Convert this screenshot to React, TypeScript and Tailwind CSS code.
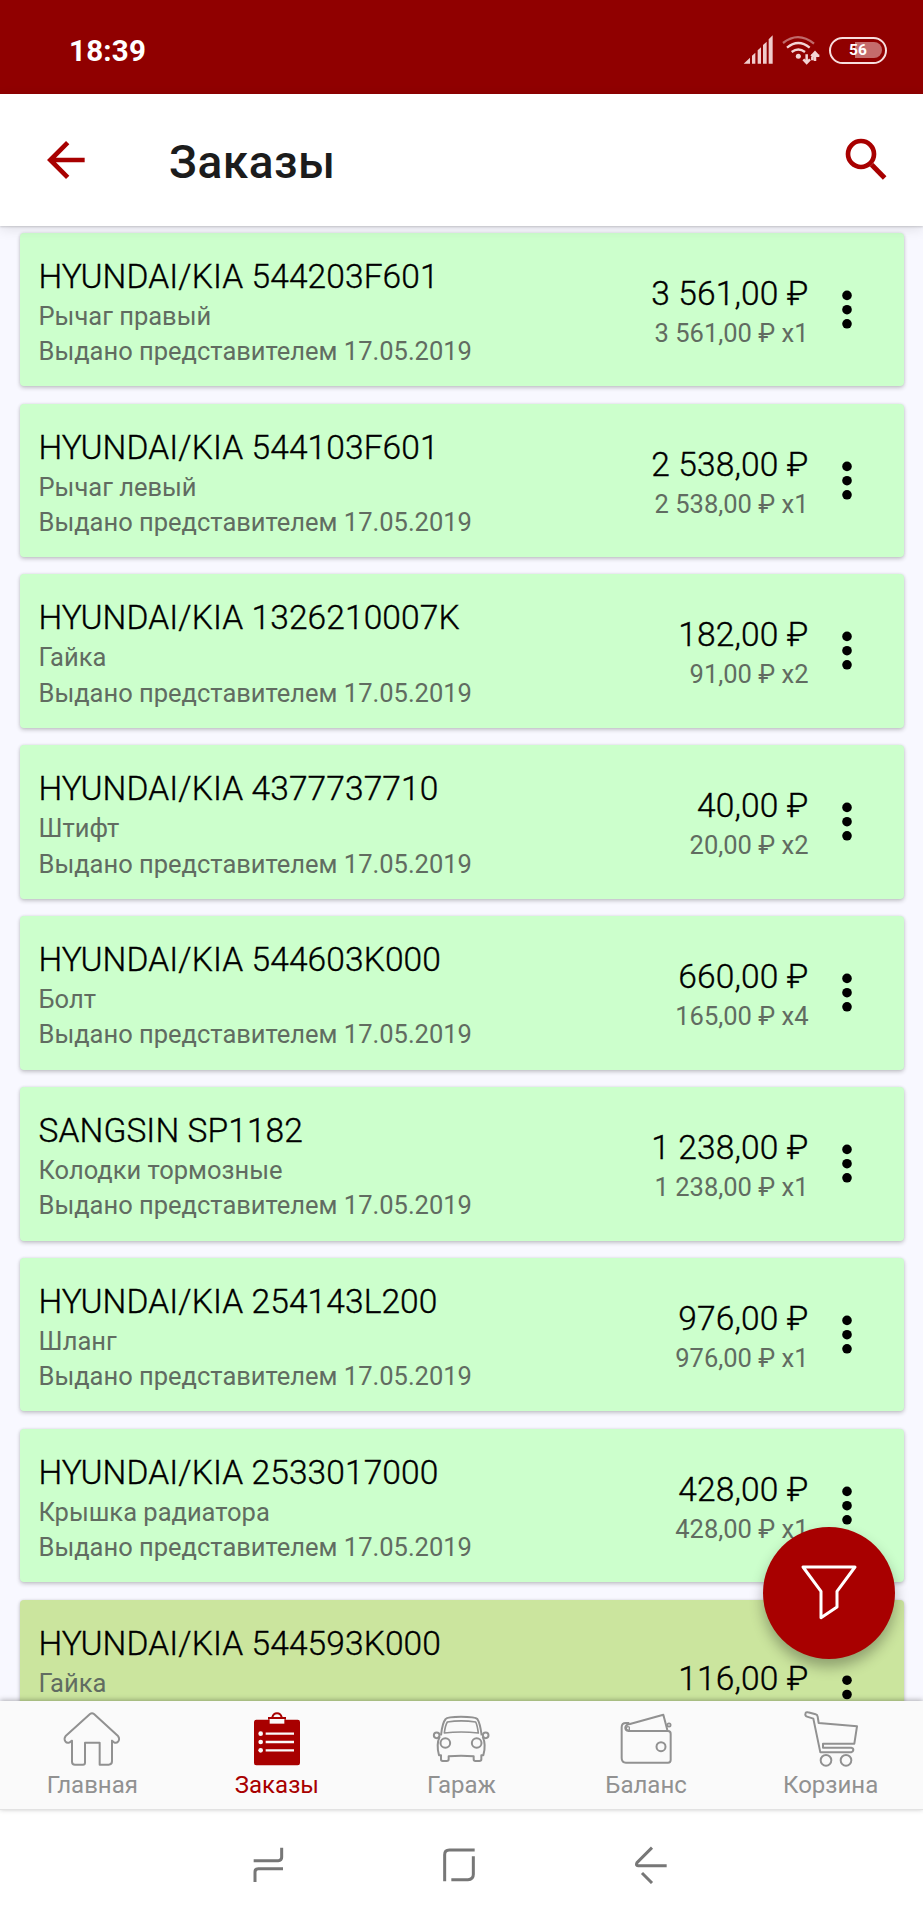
import type { ReactNode } from "react"

type Order = {
  title: string
  name: string
  total: string
  unit?: string
  status?: string
  partial?: boolean
}

const ISSUED = "Выдано представителем 17.05.2019"

const orders: Order[] = [
  { title: "HYUNDAI/KIA 544203F601", name: "Рычаг правый", total: "3 561,00 ₽", unit: "3 561,00 ₽ x1", status: ISSUED },
  { title: "HYUNDAI/KIA 544103F601", name: "Рычаг левый", total: "2 538,00 ₽", unit: "2 538,00 ₽ x1", status: ISSUED },
  { title: "HYUNDAI/KIA 1326210007K", name: "Гайка", total: "182,00 ₽", unit: "91,00 ₽ x2", status: ISSUED },
  { title: "HYUNDAI/KIA 4377737710", name: "Штифт", total: "40,00 ₽", unit: "20,00 ₽ x2", status: ISSUED },
  { title: "HYUNDAI/KIA 544603K000", name: "Болт", total: "660,00 ₽", unit: "165,00 ₽ x4", status: ISSUED },
  { title: "SANGSIN SP1182", name: "Колодки тормозные", total: "1 238,00 ₽", unit: "1 238,00 ₽ x1", status: ISSUED },
  { title: "HYUNDAI/KIA 254143L200", name: "Шланг", total: "976,00 ₽", unit: "976,00 ₽ x1", status: ISSUED },
  { title: "HYUNDAI/KIA 2533017000", name: "Крышка радиатора", total: "428,00 ₽", unit: "428,00 ₽ x1", status: ISSUED },
  { title: "HYUNDAI/KIA 544593K000", name: "Гайка", total: "116,00 ₽", partial: true },
]

function StatusBar() {
  return (
    <div className="flex h-[94px] shrink-0 items-center bg-[#900000] pl-[69px] pr-9 pt-[6px] text-white">
      <span className="grow pt-[3px] text-[29.5px] font-bold leading-none tracking-[0.2px]">18:39</span>
      <svg className="mr-[9px] h-[30px] w-[30px]" viewBox="130 104 90 90" fill="#f0cccc">
        <path d="M132 190L151 172V190ZM157 166L167 157V190H157ZM174 150L184 141V190H174ZM190 134L201 124V190H190ZM207 117L219 105V190H207Z" />
      </svg>
      <svg className="mr-[8px] h-[30px] w-[39px]" viewBox="245 102 117 90" fill="none" stroke="#f3d4d4" strokeWidth="7">
        <path d="M248 126Q294 90 341 128" stroke="#c06a6a" />
        <path d="M260 140Q294 112 328 140" />
        <path d="M274 153Q294 138 314 153" />
        <circle cx="294" cy="166" r="7.5" fill="#f3d4d4" stroke="none" />
        <path d="M319 160V184M309 175L319 186L329 175M344 180V156M333 166L344 154L355 166M332 164H357M336 178V160" strokeWidth="7.5" />
      </svg>
      <div className="relative flex h-[27px] w-[58px] items-center justify-center rounded-full border-[2.5px] border-[#f7dede]">
        <div className="absolute right-[3px] top-[3px] h-[16px] w-[27px] rounded-r-full bg-[#c46c6c]" />
        <span className="relative pt-px text-[15.5px] font-bold leading-none">56</span>
      </div>
    </div>
  )
}

function AppBar() {
  return (
    <header className="relative z-10 flex h-[132px] shrink-0 items-center bg-white pl-[47px] pr-[36px] shadow-[0_1px_2px_rgba(0,0,0,0.16),0_3px_12px_rgba(0,0,0,0.10)]">
      <svg className="mt-[-1px] h-[38px] w-[39px]" viewBox="141 422 117 114" fill="none" stroke="#a80000" strokeWidth="14">
        <path d="M254 479H152M203 427L151 479L203 531" />
      </svg>
      <h1 className="ml-[83px] mt-[3px] grow text-[46px] font-medium leading-none tracking-[0.5px] text-[#1c1c1c]">Заказы</h1>
      <svg className="mt-[-3px] h-[42px] w-[42px]" viewBox="434 413 126 126" fill="none" stroke="#a80000">
        <circle cx="482" cy="461" r="39" strokeWidth="14" />
        <path d="M514 493L553 533" strokeWidth="15" />
      </svg>
    </header>
  )
}

function OrderCard({ order }: { order: Order }) {
  return (
    <div
      className={`flex shrink-0 rounded-[4px] pl-[19px] pr-[52px] shadow-[0_2px_4px_rgba(0,0,0,0.2),0_0_3px_rgba(0,0,0,0.1)] ${
        order.partial ? "h-[189px] bg-[#cbe59e]" : "h-[153.4px] bg-[#ccffcc]"
      }`}
    >
      <div className="grow whitespace-nowrap pt-[25px]">
        <div className="text-[33.5px] font-light leading-[38px] tracking-[0.1px] text-black [-webkit-text-stroke:0.35px]">{order.title}</div>
        <div className="mt-[3px] text-[25.5px] leading-[35.2px] text-[#616c61]">{order.name}</div>
        {order.status && <div className="text-[25.5px] leading-[35.2px] text-[#616c61]">{order.status}</div>}
      </div>
      <div className={`whitespace-nowrap text-right ${order.partial ? "pt-[60px]" : "pt-[42px]"}`}>
        <div className="text-[33.5px] font-light leading-[38px] tracking-[0.15px] text-black [-webkit-text-stroke:0.35px]">{order.total}</div>
        {order.unit && <div className="mt-[3px] text-[25.5px] leading-[35.2px] text-[#616c61]">{order.unit}</div>}
      </div>
      <svg className="ml-[33px] h-full w-[10px]" viewBox="0 0 10 153.4">
        <circle cx="5" cy="62.4" r="4.8" />
        <circle cx="5" cy="76.7" r="4.8" />
        <circle cx="5" cy="90.8" r="4.8" />
      </svg>
    </div>
  )
}

function Tab({ label, viewBox, active, children }: { label: string; viewBox: string; active?: boolean; children: ReactNode }) {
  return (
    <div className={`flex w-1/5 flex-col items-center pt-[7px] ${active ? "text-[#a80000]" : "text-[#919191]"}`}>
      <svg className="h-[60px] w-[60px]" viewBox={viewBox} fill="none" stroke="currentColor" strokeWidth="6" strokeLinejoin="round">
        {children}
      </svg>
      <span className="mt-[3px] text-[24px] leading-[28px]">{label}</span>
    </div>
  )
}

function BottomTabs() {
  return (
    <nav className="relative z-10 flex h-[109px] shrink-0 border-b border-[#e2e2e2] bg-[#fafafa] shadow-[0_-1px_5px_rgba(0,0,0,0.3)]">
      <Tab label="Главная" viewBox="187 384 180 180">
        <path d="M271 402Q277 397 283 402L355 468Q361 476 356 484Q350 491 343 487L337 482V544Q337 554 327 554H300V488H256V548Q256 554 250 554H226Q217 554 217 545V482L210 487Q202 491 197 484Q192 476 198 468Z" />
      </Tab>
      <Tab label="Заказы" viewBox="741 384 180 180" active>
        <rect x="762" y="419" width="138" height="137" rx="7" fill="currentColor" stroke="none" />
        <path d="M817 412Q820 400 831 400Q842 400 845 412" />
        <path d="M804 411H858V419H804Z" fill="currentColor" stroke="none" />
        <path d="M809 417H853V431H809Z" fill="#fafafa" stroke="none" />
        <g fill="#fafafa" stroke="none">
          <circle cx="782" cy="461" r="7" />
          <circle cx="782" cy="486" r="7" />
          <circle cx="782" cy="511" r="7" />
        </g>
        <path d="M797 461H882M797 486H882M797 511H882" stroke="#fafafa" strokeWidth="7" />
      </Tab>
      <Tab label="Гараж" viewBox="94 54 180 180">
        <path d="M124 136Q128 98 138 87Q143 80 184 80Q227 80 233 87Q241 98 246 136" />
        <path d="M134 129Q137 105 143 96Q184 89 228 96Q233 106 236 129Q184 123 134 129Z" strokeWidth="5" />
        <path d="M120 140Q109 164 118 196H124V208Q124 213 129 213H141Q147 213 147 208V199Q184 195 222 199V208Q222 213 227 213H239Q245 213 245 208V196H251Q260 164 249 140" />
        <circle cx="111" cy="136" r="8.5" />
        <circle cx="258" cy="136" r="8.5" />
        <circle cx="137" cy="159" r="14.5" />
        <circle cx="231" cy="159" r="14.5" />
      </Tab>
      <Tab label="Баланс" viewBox="648 54 180 180">
        <path d="M688 99H678Q665 99 665 112V204Q665 218 678 218H804Q812 218 812 210V131Q812 123 804 123H686Q675 121 676 112Q678 103 690 102L790 74L802 120" />
        <path d="M688 111Q680 108 679 115Q680 122 688 120Z" strokeWidth="4" />
        <circle cx="807" cy="105" r="5" strokeWidth="5" />
        <circle cx="783" cy="170" r="13.5" strokeWidth="6" />
      </Tab>
      <Tab label="Корзина" viewBox="302 54 180 180">
        <path d="M315 72Q316 65 323 67L346 73Q351 74 352 80L355 99L470 109L462 161H368V173H453Q459 174 459 180Q458 186 453 187H360L339 86L320 80Q314 78 315 72Z" />
        <circle cx="377" cy="211" r="16" />
        <circle cx="437" cy="211" r="16" />
      </Tab>
    </nav>
  )
}

function SystemNav() {
  return (
    <div className="flex h-[110px] shrink-0 items-center bg-white pl-[253px]">
      <svg className="h-[36px] w-[33px]" viewBox="99 140 99 108" fill="none" stroke="#777" strokeWidth="9">
        <path d="M101 181H175Q185 181 185 171V142M189 205H115Q105 205 105 215V245" />
      </svg>
      <svg className="ml-[156px] h-[36px] w-[36px]" viewBox="666 140 108 108" fill="none" stroke="#777" strokeWidth="9">
        <path d="M764 149H688Q674 149 674 163V243M760 168V222Q760 238 744 238H694" />
      </svg>
      <svg className="ml-[156px] h-[38px] w-[36px]" viewBox="1242 137 108 114" fill="none" stroke="#777" strokeWidth="9">
        <path d="M1296 142L1251 187Q1247 196 1254 196H1340M1266 218L1296 248" />
      </svg>
    </div>
  )
}

export default function App() {
  return (
    <div className="relative flex h-[1920px] w-full flex-col overflow-hidden bg-[#f8f8ff] font-[Roboto,sans-serif]">
      <StatusBar />
      <AppBar />
      <main className="flex min-h-0 flex-1 flex-col gap-[17.5px] overflow-hidden px-[19.5px] pt-[6.7px]">
        {orders.map((order) => (
          <OrderCard key={order.title} order={order} />
        ))}
      </main>
      <BottomTabs />
      <SystemNav />
      <button
        aria-label="Фильтр"
        className="absolute bottom-[261px] right-[28px] z-20 h-[132px] w-[132px] rounded-full bg-[#a80000] shadow-[0_8px_14px_rgba(0,0,0,0.3)]"
      >
        <svg className="h-[132px] w-[132px]" viewBox="489 201 396 396" fill="none" stroke="#fff" strokeWidth="9" strokeLinejoin="round">
          <path d="M609 321H765L711 394V441L663 473V394Z" />
        </svg>
      </button>
    </div>
  )
}
